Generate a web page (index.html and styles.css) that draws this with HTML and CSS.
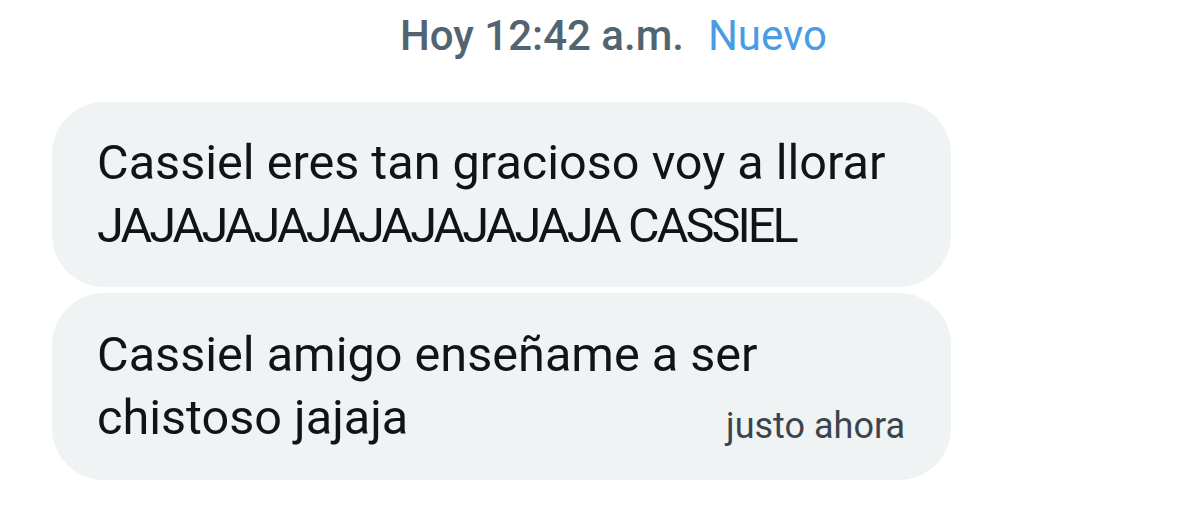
FILE: index.html
```html
<!DOCTYPE html>
<html lang="es">
<head>
    <meta charset="utf-8">
    <link rel="stylesheet" href="styles.css">
</head>
<body>
    <div class="chat">
        <div class="divider">
            <span class="day">Hoy 12:42 a.m.</span>
            <span class="new">Nuevo</span>
        </div>

        <div class="bubble">
            <p class="msg">Cassiel eres tan gracioso voy a llorar<br><span class="caps">JAJAJAJAJAJAJAJAJAJA CASSIEL</span></p>
        </div>

        <div class="bubble bubble-last">
            <p class="msg">Cassiel amigo enseñame a ser<br>chistoso jajaja</p>
            <span class="stamp">justo ahora</span>
        </div>
    </div>
</body>
</html>
```

FILE: styles.css
```css
body {
    margin: 0;
    background: #ffffff;
    font-family: Roboto, "Liberation Sans", sans-serif;
    color: #0f1419;
}

.chat {
    padding: 12px 0 0 52px;
}

.divider {
    display: flex;
    gap: 24px;
    padding-left: 348px;
    font-size: 42px;
    line-height: 48px;
    height: 90px;
    white-space: nowrap;
}

.day {
    color: #536471;
    font-weight: 500;
}

.new {
    color: #4a9be6;
}

.bubble {
    width: 854px;
    padding: 29px 0 30px 45px;
    margin-bottom: 6px;
    background: #eff3f4;
    border-radius: 52px;
}

.msg {
    margin: 0;
    font-size: 48.6px;
    line-height: 63px;
    white-space: nowrap;
}

.caps {
    letter-spacing: -2.9px;
}

.bubble-last {
    display: flex;
    justify-content: space-between;
    align-items: flex-end;
    padding-top: 30px;
    padding-bottom: 31px;
}

.bubble-last .msg {
    flex: 1;
    min-width: 0;
}

.stamp {
    font-size: 36px;
    line-height: 46px;
    color: #3b444c;
    padding-right: 46px;
    white-space: nowrap;
}
```
